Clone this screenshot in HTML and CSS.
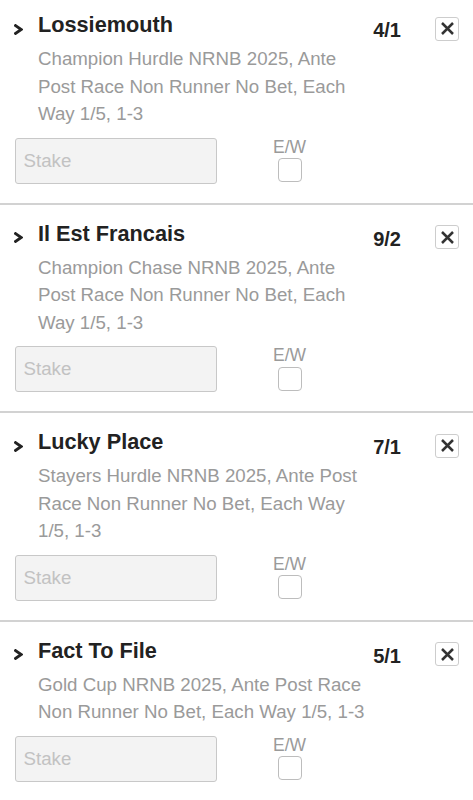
FILE: index.html
```html
<!DOCTYPE html>
<html lang="en">
<head>
<meta charset="utf-8">
<title>Bet slip</title>
<link rel="stylesheet" href="styles.css">
</head>
<body>
<div class="slip">
  <div class="bet">
    <div class="bet-head">
      <svg class="chev" viewBox="0 0 9 11" width="9" height="11"><polyline points="1.6,1.6 7.2,5.5 1.6,9.4" fill="none" stroke="#222" stroke-width="2.9" stroke-linecap="square" stroke-linejoin="miter"/></svg>
      <div class="name">Lossiemouth</div>
      <div class="odds">4/1</div>
      <button class="close" aria-label="Remove"><svg viewBox="0 0 21 21" width="21" height="21"><path d="M5 5 L16 16 M16 5 L5 16" stroke="#333" stroke-width="2.5" fill="none"/></svg></button>
    </div>
    <div class="desc">Champion Hurdle NRNB 2025, Ante Post Race Non Runner No Bet, Each Way 1/5, 1-3</div>
    <div class="bet-foot">
      <input class="stake" type="text" placeholder="Stake">
      <label class="ew"><span class="ew-label">E/W</span><input class="ew-box" type="checkbox"></label>
    </div>
  </div>
  <div class="bet">
    <div class="bet-head">
      <svg class="chev" viewBox="0 0 9 11" width="9" height="11"><polyline points="1.6,1.6 7.2,5.5 1.6,9.4" fill="none" stroke="#222" stroke-width="2.9" stroke-linecap="square" stroke-linejoin="miter"/></svg>
      <div class="name">Il Est Francais</div>
      <div class="odds">9/2</div>
      <button class="close" aria-label="Remove"><svg viewBox="0 0 21 21" width="21" height="21"><path d="M5 5 L16 16 M16 5 L5 16" stroke="#333" stroke-width="2.5" fill="none"/></svg></button>
    </div>
    <div class="desc">Champion Chase NRNB 2025, Ante Post Race Non Runner No Bet, Each Way 1/5, 1-3</div>
    <div class="bet-foot">
      <input class="stake" type="text" placeholder="Stake">
      <label class="ew"><span class="ew-label">E/W</span><input class="ew-box" type="checkbox"></label>
    </div>
  </div>
  <div class="bet">
    <div class="bet-head">
      <svg class="chev" viewBox="0 0 9 11" width="9" height="11"><polyline points="1.6,1.6 7.2,5.5 1.6,9.4" fill="none" stroke="#222" stroke-width="2.9" stroke-linecap="square" stroke-linejoin="miter"/></svg>
      <div class="name">Lucky Place</div>
      <div class="odds">7/1</div>
      <button class="close" aria-label="Remove"><svg viewBox="0 0 21 21" width="21" height="21"><path d="M5 5 L16 16 M16 5 L5 16" stroke="#333" stroke-width="2.5" fill="none"/></svg></button>
    </div>
    <div class="desc">Stayers Hurdle NRNB 2025, Ante Post Race Non Runner No Bet, Each Way 1/5, 1-3</div>
    <div class="bet-foot">
      <input class="stake" type="text" placeholder="Stake">
      <label class="ew"><span class="ew-label">E/W</span><input class="ew-box" type="checkbox"></label>
    </div>
  </div>
  <div class="bet">
    <div class="bet-head">
      <svg class="chev" viewBox="0 0 9 11" width="9" height="11"><polyline points="1.6,1.6 7.2,5.5 1.6,9.4" fill="none" stroke="#222" stroke-width="2.9" stroke-linecap="square" stroke-linejoin="miter"/></svg>
      <div class="name">Fact To File</div>
      <div class="odds">5/1</div>
      <button class="close" aria-label="Remove"><svg viewBox="0 0 21 21" width="21" height="21"><path d="M5 5 L16 16 M16 5 L5 16" stroke="#333" stroke-width="2.5" fill="none"/></svg></button>
    </div>
    <div class="desc">Gold Cup NRNB 2025, Ante Post Race Non Runner No Bet, Each Way 1/5, 1-3</div>
    <div class="bet-foot">
      <input class="stake" type="text" placeholder="Stake">
      <label class="ew"><span class="ew-label">E/W</span><input class="ew-box" type="checkbox"></label>
    </div>
  </div>
</div>
</body>
</html>
```

FILE: styles.css
```css
html, body {
  margin: 0;
  padding: 0;
  background: #ffffff;
}

body {
  font-family: "Liberation Sans", Arial, sans-serif;
  color: #222222;
}

.slip {
  display: flex;
  flex-direction: column;
}

.bet {
  padding: 16px 0 19px;
  border-bottom: 2px solid #d2d2d2;
}

.bet:first-child {
  padding-top: 12px;
}

.bet-head {
  display: flex;
  align-items: flex-start;
  height: 26px;
}

.chev {
  flex: none;
  margin: 11.5px 15px 0 14px;
}

.name {
  flex: 1;
  font-size: 21.7px;
  line-height: 26px;
  font-weight: bold;
  color: #222222;
}

.odds {
  font-size: 20px;
  line-height: 26px;
  font-weight: bold;
  color: #222222;
  margin-top: 5px;
  margin-right: 34px;
}

.close {
  flex: none;
  box-sizing: border-box;
  width: 24px;
  height: 24px;
  margin: 4.5px 14px 0 0;
  padding: 0;
  border: 1.5px solid #cdcdcd;
  border-radius: 3px;
  background: #ffffff;
  display: flex;
  align-items: center;
  justify-content: center;
}

.desc {
  margin: 7px 100px 0 38px;
  font-size: 18.7px;
  line-height: 27.5px;
  color: #9a9a9a;
}

.bet-foot {
  display: flex;
  align-items: flex-start;
  margin-top: 10px;
  padding-left: 15px;
}

.stake {
  box-sizing: border-box;
  width: 202px;
  height: 46px;
  margin: 0;
  padding: 0 7.5px;
  border: 1.5px solid #c8c8c8;
  border-radius: 3px;
  background: #f3f3f3;
  font-family: "Liberation Sans", Arial, sans-serif;
  font-size: 18.7px;
  color: #444444;
}

.stake::placeholder {
  color: #c2c2c2;
}

.ew {
  display: flex;
  flex-direction: column;
  align-items: center;
  margin-left: 56px;
}

.ew-label {
  font-size: 17.5px;
  line-height: 18px;
  color: #9a9a9a;
}

.ew-box {
  appearance: none;
  -webkit-appearance: none;
  box-sizing: border-box;
  width: 24px;
  height: 24px;
  margin: 2.5px 0 0;
  border: 1.5px solid #bdbdbd;
  border-radius: 4px;
  background: #ffffff;
}
```
